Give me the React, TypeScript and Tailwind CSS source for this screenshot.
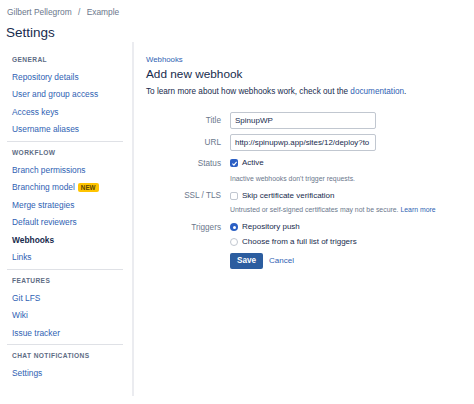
const font = { fontFamily: '"Liberation Sans", Arial, sans-serif' };

interface NavItem {
  label: string;
  active?: boolean;
  badge?: string;
}

interface NavSection {
  title: string;
  items: NavItem[];
}

const sections: NavSection[] = [
  {
    title: 'General',
    items: [
      { label: 'Repository details' },
      { label: 'User and group access' },
      { label: 'Access keys' },
      { label: 'Username aliases' },
    ],
  },
  {
    title: 'Workflow',
    items: [
      { label: 'Branch permissions' },
      { label: 'Branching model', badge: 'NEW' },
      { label: 'Merge strategies' },
      { label: 'Default reviewers' },
      { label: 'Webhooks', active: true },
      { label: 'Links' },
    ],
  },
  {
    title: 'Features',
    items: [{ label: 'Git LFS' }, { label: 'Wiki' }, { label: 'Issue tracker' }],
  },
  {
    title: 'Chat notifications',
    items: [{ label: 'Settings' }],
  },
];

function Sidebar() {
  return (
    <nav className="w-[127px] shrink-0 pl-[7px] pt-[9px]">
      {sections.map((section, i) => (
        <div key={section.title}>
          {i > 0 && <div className="my-[2.25px] mr-[4px] h-px bg-[#dfe1e6]" />}
          <div className="flex h-[17.5px] items-center pl-[5px] text-[6.6px] font-bold uppercase tracking-[0.06em] text-[#5e6c84]">
            {section.title}
          </div>
          <ul>
            {section.items.map((item) => (
              <li key={item.label} className="flex h-[17.5px] items-center gap-[3px] pl-[5px] text-[8.4px]">
                <span className={item.active ? 'font-bold text-[#172b4d]' : 'text-[#2f5fb3]'}>
                  {item.label}
                </span>
                {item.badge && (
                  <span className="rounded-[2px] bg-[#ffc400] px-[3px] text-[6.3px] leading-[9px] font-bold text-[#5b4500]">
                    {item.badge}
                  </span>
                )}
              </li>
            ))}
          </ul>
        </div>
      ))}
    </nav>
  );
}

function Row({ label, children, className = '' }: { label: string; children: React.ReactNode; className?: string }) {
  return (
    <div className={`flex items-start ${className}`}>
      <div className="w-[75px] shrink-0 text-right text-[8.2px] leading-[17px] text-[#6b778c]">{label}</div>
      <div className="ml-[9px] flex-1">{children}</div>
    </div>
  );
}

function Checkbox({ checked }: { checked?: boolean }) {
  return checked ? (
    <span className="flex h-[8px] w-[8px] items-center justify-center rounded-[2px] bg-[#2b5fc4]">
      <svg viewBox="0 0 10 10" className="h-[7px] w-[7px]">
        <path d="M2 5.2 L4.2 7.3 L8 2.8" fill="none" stroke="white" strokeWidth="1.6" />
      </svg>
    </span>
  ) : (
    <span className="h-[8px] w-[8px] rounded-[2px] border border-[#c1c7d0] bg-white" />
  );
}

function Radio({ checked }: { checked?: boolean }) {
  return checked ? (
    <span className="flex h-[8px] w-[8px] items-center justify-center rounded-full bg-[#2b5fc4]">
      <span className="h-[3px] w-[3px] rounded-full bg-white" />
    </span>
  ) : (
    <span className="h-[8px] w-[8px] rounded-full border border-[#c1c7d0] bg-white" />
  );
}

function Main() {
  return (
    <main className="flex-1 pl-[12px] pt-[12px]">
      <div className="text-[7.8px] leading-[12px] text-[#2f5fb3]">Webhooks</div>
      <h2 className="text-[11.8px] leading-[16px] text-[#172b4d]">Add new webhook</h2>
      <p className="mt-[4px] text-[8.2px] leading-[12px] text-[#172b4d]">
        To learn more about how webhooks work, check out the{' '}
        <span className="text-[#2f5fb3]">documentation</span>.
      </p>

      <Row label="Title" className="mt-[14px]">
        <div className="flex h-[17px] w-[146px] items-center rounded-[2px] border border-[#c1c7d0] px-[4px] text-[8px] text-[#172b4d]">
          SpinupWP
        </div>
      </Row>
      <Row label="URL" className="mt-[5px]">
        <div className="flex h-[17px] w-[146px] items-center overflow-hidden whitespace-nowrap rounded-[2px] border border-[#c1c7d0] px-[4px] text-[7.9px] text-[#172b4d]">
          http://spinupwp.app/sites/12/deploy?to
        </div>
      </Row>

      <Row label="Status" className="mt-[3.5px]">
        <div className="flex h-[17px] items-center gap-[4px] text-[8px] text-[#172b4d]">
          <Checkbox checked />
          Active
        </div>
        <div className="mt-[1px] text-[6.9px] leading-[11px] text-[#6b778c]">Inactive webhooks don't trigger requests.</div>
      </Row>

      <Row label="SSL / TLS" className="mt-[3.5px]">
        <div className="flex h-[17px] items-center gap-[4px] text-[8px] text-[#172b4d]">
          <Checkbox />
          Skip certificate verification
        </div>
        <div className="whitespace-nowrap text-[6.9px] leading-[11px] text-[#6b778c]">
          Untrusted or self-signed certificates may not be secure.{' '}
          <span className="text-[#2f5fb3]">Learn more</span>
        </div>
      </Row>

      <Row label="Triggers" className="mt-[3.8px]">
        <div className="flex h-[17px] items-center gap-[4px] text-[8px] text-[#172b4d]">
          <Radio checked />
          Repository push
        </div>
        <div className="flex h-[12px] items-center gap-[4px] text-[8px] text-[#172b4d]">
          <Radio />
          Choose from a full list of triggers
        </div>
        <div className="mt-[5px] flex items-center gap-[6px]">
          <button className="h-[16.5px] w-[33px] rounded-[2px] bg-[#2c5d9f] text-[8.2px] font-bold text-white">
            Save
          </button>
          <span className="text-[8px] text-[#2f5fb3]">Cancel</span>
        </div>
      </Row>
    </main>
  );
}

export default function App() {
  return (
    <div className="h-[404px] w-[474px] overflow-hidden bg-white" style={font}>
      <div className="pl-[7px] pt-[6px] text-[8.4px] leading-[12px] text-[#6b778c]">
        Gilbert Pellegrom <span className="mx-[4px]">/</span> Example
      </div>
      <h1 className="pl-[6px] pt-[6px] text-[13.5px] leading-[18px] text-[#172b4d]">Settings</h1>
      <div className="flex">
        <div className="flex w-[134px] shrink-0 border-r-2 border-[#ebecf0] pb-[13px]">
          <Sidebar />
        </div>
        <Main />
      </div>
    </div>
  );
}
